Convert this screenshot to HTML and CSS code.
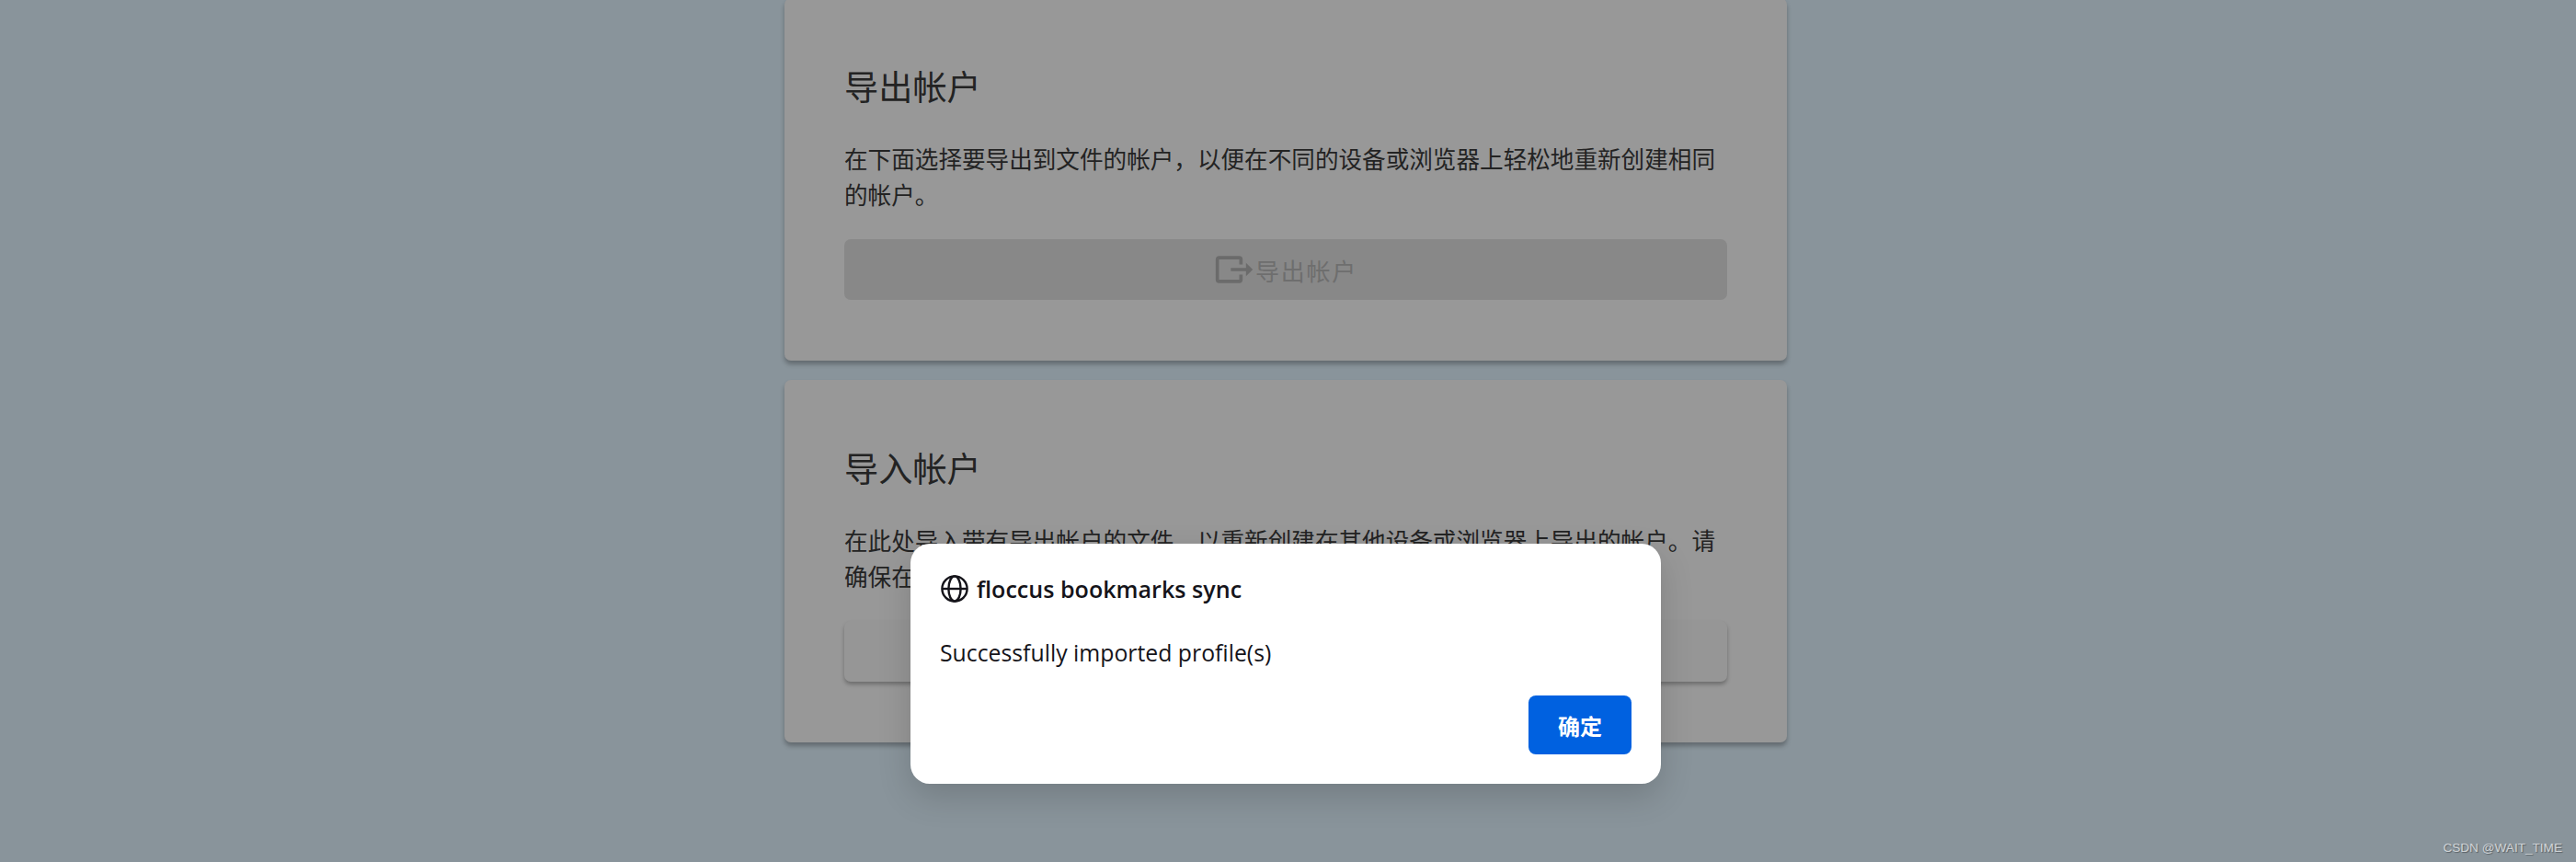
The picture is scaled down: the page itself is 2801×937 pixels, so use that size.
FILE: index.html
```html
<!DOCTYPE html>
<html lang="zh">
<head>
    <meta charset="UTF-8">
    <title>floccus</title>
    <link rel="stylesheet" href="styles.css">
</head>
<body>
    <main class="page">
        <section class="card">
            <h2 class="card-title">导出帐户</h2>
            <p class="card-text">在下面选择要导出到文件的帐户，以便在不同的设备或浏览器上轻松地重新创建相同的帐户。</p>
            <button class="action action-disabled">
                <svg class="action-icon" viewBox="0 0 24 24"><path d="M23,12L19,8V11H10V13H19V16M1,18V6C1,4.89 1.9,4 3,4H15A2,2 0 0,1 17,6V9H15V6H3V18H15V15H17V18A2,2 0 0,1 15,20H3A2,2 0 0,1 1,18Z"/></svg>
                <span>导出帐户</span>
            </button>
        </section>
        <section class="card">
            <h2 class="card-title">导入帐户</h2>
            <p class="card-text">在此处导入带有导出帐户的文件，以重新创建在其他设备或浏览器上导出的帐户。请确保在导入之前已选择正确的文件。</p>
            <button class="action">导入帐户</button>
        </section>
    </main>

    <div class="dialog">
        <div class="dialog-head">
            <svg class="dialog-icon" viewBox="0 0 30 30"><circle cx="15" cy="15" r="13.6"/><ellipse cx="15" cy="15" rx="6.6" ry="13.6"/><path d="M1.4 15H28.6"/></svg>
            <span>floccus bookmarks sync</span>
        </div>
        <p class="dialog-text">Successfully imported profile(s)</p>
        <div class="dialog-foot">
            <button class="dialog-ok">确定</button>
        </div>
    </div>

    <div class="watermark">CSDN @WAIT_TIME</div>
</body>
</html>
```

FILE: styles.css
```css
html, body {
    height: 100%;
}

body {
    margin: 0;
    overflow: hidden;
    background-color: #89949b;
    font-family: "Noto Sans CJK SC", "Noto Sans", sans-serif;
}

.page {
    width: 1090px;
    margin: -2px 0 0 853px;
    display: flex;
    flex-direction: column;
    gap: 21px;
}

.card {
    height: 394px;
    box-sizing: border-box;
    padding: 73px 65px 0;
    background-color: #989898;
    border-radius: 7px;
    box-shadow: 0 4px 5px rgba(0, 0, 0, 0.28);
    color: #232323;
}

.card-title {
    margin: 0;
    height: 44px;
    font-size: 37.2px;
    line-height: 44px;
    font-weight: 400;
}

.card-text {
    margin: 37px 0 0;
    height: 80px;
    font-size: 25.6px;
    line-height: 39px;
}

.action {
    display: flex;
    align-items: center;
    justify-content: center;
    gap: 1px;
    width: 100%;
    height: 66px;
    margin-top: 28px;
    border: none;
    border-radius: 7px;
    background-color: #969696;
    box-shadow: 0 3px 4px rgba(0, 0, 0, 0.28);
    font-family: inherit;
    font-size: 26px;
    letter-spacing: 1.8px;
    color: #6e6e6e;
}

.action-disabled {
    background-color: #888888;
    box-shadow: none;
}

.action-icon {
    width: 44px;
    height: 44px;
    fill: #6b6b6b;
}

.dialog {
    position: absolute;
    left: 990px;
    top: 591px;
    width: 816px;
    height: 261px;
    box-sizing: border-box;
    padding: 32px 32px;
    background-color: #fff;
    border-radius: 21px;
    box-shadow: 0 14px 36px rgba(0, 0, 0, 0.16);
    color: #15141a;
}

.dialog-head {
    display: flex;
    align-items: center;
    gap: 9px;
    height: 34px;
    font-family: "Open Sans", sans-serif;
    font-size: 25.1px;
    font-weight: 600;
}

.dialog-icon {
    width: 30px;
    height: 30px;
    margin-left: 1px;
    fill: none;
    stroke: #15141a;
    stroke-width: 2.4;
}

.dialog-text {
    margin: 35px 0 0;
    height: 34px;
    font-family: "Open Sans", sans-serif;
    font-size: 24.8px;
    line-height: 34px;
}

.dialog-foot {
    display: flex;
    justify-content: flex-end;
    margin-top: 30px;
}

.dialog-ok {
    width: 112px;
    height: 64px;
    border: none;
    border-radius: 8px;
    background-color: #0061e0;
    color: #fff;
    font-family: inherit;
    font-size: 24px;
    font-weight: 700;
}

.watermark {
    position: absolute;
    right: 15px;
    bottom: 8px;
    font-family: "Liberation Sans", sans-serif;
    font-size: 13.6px;
    color: #d0d4d7;
    text-shadow: 1px 1px 1px rgba(0, 0, 0, 0.35);
}
```
